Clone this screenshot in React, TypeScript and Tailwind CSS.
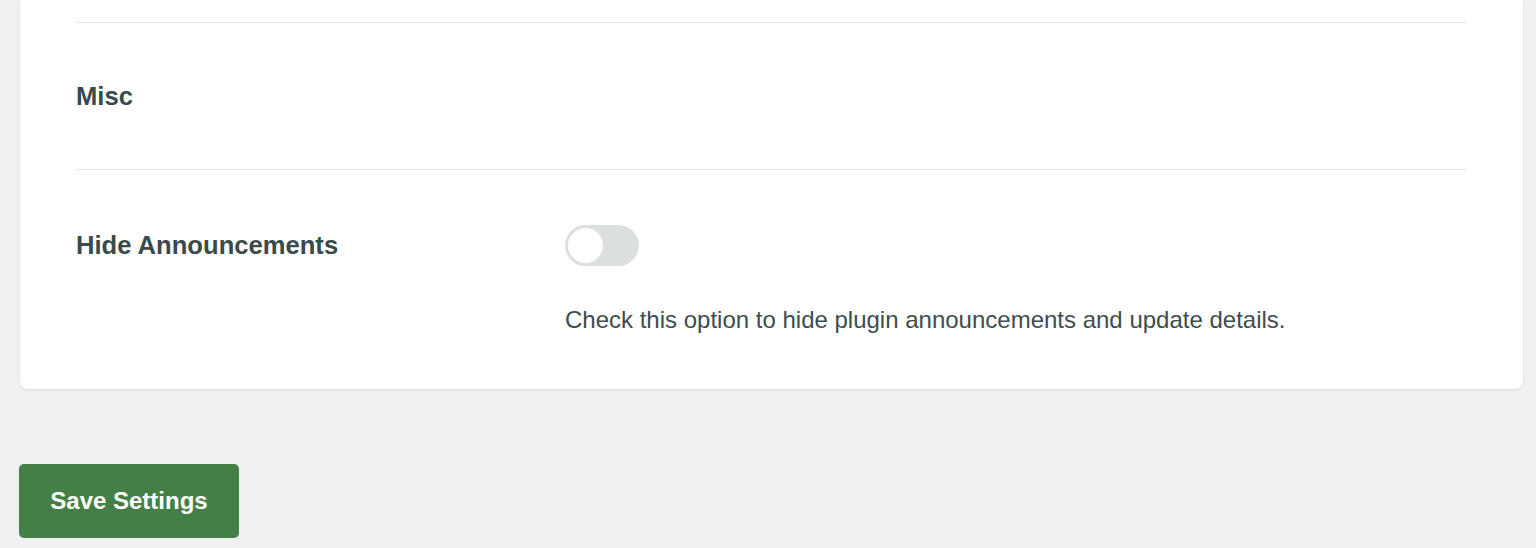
import React from "react";

export default function App() {
  return (
    <div
      className="w-[1536px] h-[548px] overflow-hidden bg-[#f0f0f1]"
      style={{ fontFamily: '"Liberation Sans", Arial, sans-serif' }}
    >
      <div className="ml-[20px] mr-[13px] bg-white rounded-b-[8px] shadow-[0_1px_3px_rgba(0,0,0,0.08)] px-[56px] pt-[22px] pb-[51px]">
        <div className="border-t border-[#e6e6e6]" />
        <div className="h-[146px] flex items-center">
          <h2 className="text-[25.6px] leading-[41px] font-bold text-[#3a4a4a]">Misc</h2>
        </div>
        <div className="border-t border-[#e6e6e6]" />
        <div className="flex pt-[55px]">
          <div className="w-[489px] shrink-0">
            <span className="text-[25.6px] leading-[40px] font-bold text-[#3a4a4a]">
              Hide Announcements
            </span>
          </div>
          <div className="flex flex-col">
            <button
              type="button"
              className="w-[74px] h-[41px] rounded-full bg-[#dcdfe0] p-[3px] flex items-center"
              aria-pressed="false"
            >
              <span className="block w-[35px] h-[35px] rounded-full bg-white" />
            </button>
            <p className="mt-[36px] text-[24px] leading-[36px] text-[#3e4d4d]">
              Check this option to hide plugin announcements and update details.
            </p>
          </div>
        </div>
      </div>
      <div className="ml-[19px] mt-[75px]">
        <button
          type="button"
          className="w-[220px] h-[74px] rounded-[5px] bg-[#448045] text-white text-[24px] font-bold"
        >
          Save Settings
        </button>
      </div>
    </div>
  );
}
